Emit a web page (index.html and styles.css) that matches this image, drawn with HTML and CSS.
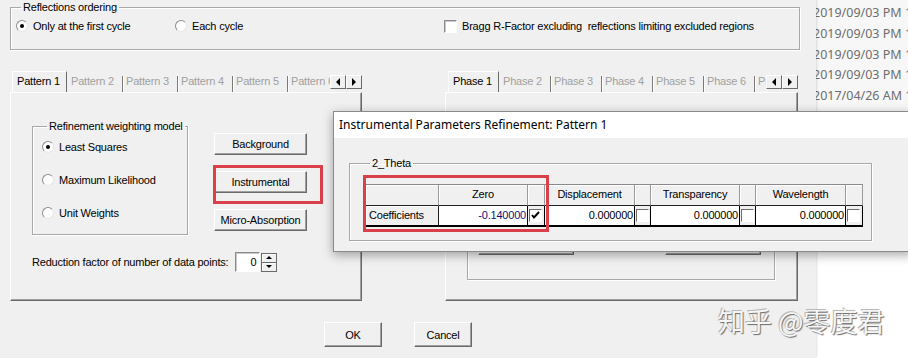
FILE: index.html
```html
<!DOCTYPE html>
<html>
<head>
<meta charset="utf-8">
<link rel="stylesheet" href="styles.css">
</head>
<body>
<div class="screen">
  <div class="app">
    <fieldset class="grp grp-order">
      <legend>Reflections ordering</legend>
      <div class="order-row">
        <div class="opt opt-first"><span class="rb on"></span><span>Only at the first cycle</span></div>
        <div class="opt opt-each"><span class="rb"></span><span>Each cycle</span></div>
        <div class="opt"><span class="cbx"></span><span>Bragg R-Factor excluding&nbsp; reflections limiting excluded regions</span></div>
      </div>
    </fieldset>

    <div class="tabs-row">
      <div class="tabctl tabctl-left">
        <div class="tabstrip">
          <div class="tabs">
            <div class="tab sel">Pattern 1</div>
            <div class="tab">Pattern 2</div>
            <div class="tab">Pattern 3</div>
            <div class="tab">Pattern 4</div>
            <div class="tab">Pattern 5</div>
            <div class="tab">Pattern 6</div>
          </div>
          <div class="arrows"><span class="arr"><i class="tri-l"></i></span><span class="arr"><i class="tri-r"></i></span></div>
        </div>
        <div class="tabpanel">
          <div class="pbody">
            <div class="prow">
              <fieldset class="grp grp-weight">
                <legend>Refinement weighting model</legend>
                <div class="wlist">
                  <div class="opt"><span class="rb on"></span><span>Least Squares</span></div>
                  <div class="opt"><span class="rb"></span><span>Maximum Likelihood</span></div>
                  <div class="opt"><span class="rb"></span><span>Unit Weights</span></div>
                </div>
              </fieldset>
              <div class="btncol">
                <div class="btn">Background</div>
                <div class="btn">Instrumental</div>
                <div class="btn">Micro-Absorption</div>
                <div class="mark mark-btn"></div>
              </div>
            </div>
            <div class="reduce">
              <span>Reduction factor of number of data points:</span>
              <span class="edit">0</span>
              <span class="spin"><span class="sp"><i class="tri-u"></i></span><span class="sp"><i class="tri-d"></i></span></span>
            </div>
          </div>
        </div>
      </div>

      <div class="tabctl tabctl-right">
        <div class="tabstrip">
          <div class="tabs">
            <div class="tab ph sel">Phase 1</div>
            <div class="tab ph">Phase 2</div>
            <div class="tab ph">Phase 3</div>
            <div class="tab ph">Phase 4</div>
            <div class="tab ph">Phase 5</div>
            <div class="tab ph">Phase 6</div>
            <div class="tab ph">Phase 7</div>
          </div>
          <div class="arrows"><span class="arr"><i class="tri-l"></i></span><span class="arr"><i class="tri-r"></i></span></div>
        </div>
        <div class="tabpanel">
          <div class="ibox">
            <div class="btn ibtn"></div>
            <div class="btn ibtn"></div>
          </div>
        </div>
      </div>
    </div>

    <div class="actions">
      <div class="btn abtn">OK</div>
      <div class="btn abtn">Cancel</div>
    </div>
  </div>

  <div class="side">
    <div class="dates">
      <div>2019/09/03 PM 1</div>
      <div>2019/09/03 PM 1</div>
      <div>2019/09/03 PM 1</div>
      <div>2019/09/03 PM 1</div>
      <div>2017/04/26 AM 1</div>
    </div>
  </div>

  <div class="dialog">
    <div class="dtitle">Instrumental Parameters Refinement: Pattern 1</div>
    <div class="dbody">
      <fieldset class="grp grp-theta">
        <legend>2_Theta</legend>
        <div class="grid">
          <div class="gh"></div>
          <div class="gh">Zero</div>
          <div class="gh"></div>
          <div class="gh">Displacement</div>
          <div class="gh"></div>
          <div class="gh">Transparency</div>
          <div class="gh"></div>
          <div class="gh">Wavelength</div>
          <div class="gh"></div>

          <div class="rh">Coefficients</div>
          <div class="gv neg">-0.140000</div>
          <div class="gc"><span class="cb"><svg width="11" height="11" viewBox="0 0 11 11"><path d="M2 5 L4 7.5 L9 2" fill="none" stroke="#000" stroke-width="2"/></svg></span></div>
          <div class="gv">0.000000</div>
          <div class="gc"><span class="cb"></span></div>
          <div class="gv">0.000000</div>
          <div class="gc"><span class="cb"></span></div>
          <div class="gv">0.000000</div>
          <div class="gc"><span class="cb"></span></div>
        </div>
      </fieldset>
    </div>
    <div class="mark mark-grid"></div>
  </div>

  <div class="watermark">知乎 @零度君</div>
</div>
</body>
</html>
```

FILE: styles.css
```css
* { box-sizing: border-box; }
html, body { margin: 0; padding: 0; }
body {
  width: 908px; height: 358px; overflow: hidden;
  background: #fff;
  font-family: "Liberation Sans", Arial, sans-serif;
  font-size: 11px; letter-spacing: -0.2px; color: #000;
}
.screen { position: relative; display: flex; width: 908px; height: 358px; }

.app {
  width: 816px; flex: none; background: #f0f0f0;
  padding: 0 0 0 10px; position: relative; z-index: 1;
  box-shadow: 1px 0 2px rgba(0,0,0,.12);
}

.grp { margin: 0; border: 1px solid #a8a8a8; min-width: 0; box-shadow: 1px 1px 0 #fff, inset 1px 1px 0 #fff; }
.grp > legend { padding: 0 2px; margin-left: 5px; line-height: 14px; }

.grp-order { width: 790px; padding: 5px 0 16px 5px; }
.order-row { display: flex; align-items: center; height: 14px; }
.opt { display: flex; align-items: center; gap: 5px; white-space: nowrap; height: 14px; }
.opt-first { width: 159px; }
.opt-each { width: 269px; }

.rb {
  width: 12px; height: 12px; border-radius: 50%; background: #fff; flex: none;
  border: 1px solid; border-color: #8c8c8c #e6e6e6 #e6e6e6 #8c8c8c; position: relative;
}
.rb.on::after {
  content: ""; position: absolute; left: 3px; top: 3px; width: 4px; height: 4px;
  border-radius: 50%; background: #000;
}
.cbx {
  width: 13px; height: 13px; background: #fff; flex: none;
  border: 1px solid; border-color: #8c8c8c #fff #fff #8c8c8c;
  box-shadow: inset 1px 1px 0 #c8c8c8;
}

.tabs-row { display: flex; margin-top: 21px; }
.tabctl-left { width: 352px; }
.tabctl-right { width: 353px; margin-left: 83px; }

.tabstrip { display: flex; align-items: flex-end; height: 21px; padding-left: 2px; }
.tabctl-right .tabstrip { padding-left: 3px; }
.tabs { flex: 1; display: flex; align-items: flex-end; overflow: hidden; height: 21px; }
.tab {
  flex: none; width: 55px; height: 16px; line-height: 11px; padding-left: 3px;
  color: #a0a0a0; white-space: nowrap;
  border-left: 1px solid #7a7a7a; box-shadow: inset 1px 0 0 #fff;
}
.tab.ph { width: 51px; }
.tab.sel {
  height: 21px; line-height: 19px; padding-left: 4px; color: #000;
  border: 1px solid; border-color: #fff #6a6a6a transparent #fff; border-bottom: 0;
  box-shadow: none;
}
.tab.sel + .tab { border-left: 0; box-shadow: none; padding-left: 4px; }
.arrows { display: flex; margin-bottom: 3px; flex: none; }
.arr {
  width: 16px; height: 14px; background: #f0f0f0;
  border: 1px solid; border-color: #fff #6a6a6a #6a6a6a #fff;
  display: flex; align-items: center; justify-content: center;
}
.tri-l { width: 0; height: 0; border-top: 4px solid transparent; border-bottom: 4px solid transparent; border-right: 4px solid #000; }
.tri-r { width: 0; height: 0; border-top: 4px solid transparent; border-bottom: 4px solid transparent; border-left: 4px solid #000; }
.tri-u { width: 0; height: 0; border-left: 3px solid transparent; border-right: 3px solid transparent; border-bottom: 3px solid #000; }
.tri-d { width: 0; height: 0; border-left: 3px solid transparent; border-right: 3px solid transparent; border-top: 3px solid #000; }

.tabpanel {
  height: 209px; position: relative;
  border: 1px solid; border-color: #fff #6a6a6a #6a6a6a #fff;
  box-shadow: inset -1px -1px 0 #a0a0a0;
}
.pbody { padding: 26px 0 0 21px; }
.prow { display: flex; align-items: flex-start; }
.grp-weight { width: 156px; height: 116px; padding: 7px 0 0 9px; }
.wlist { display: flex; flex-direction: column; gap: 19px; }

.btncol { margin-left: 26px; margin-top: 14px; display: flex; flex-direction: column; gap: 16px; position: relative; }
.btn {
  width: 93px; height: 22px; background: #f0f0f0;
  border: 1px solid; border-color: #fff #6a6a6a #6a6a6a #fff;
  box-shadow: inset -1px -1px 0 #a0a0a0;
  display: flex; align-items: center; justify-content: center; white-space: nowrap;
}
.mark { position: absolute; border: 3px solid #d9404a; }
.mark-btn { left: -1px; top: 32px; width: 110px; height: 39px; }

.reduce { display: flex; align-items: center; margin-top: 17px; height: 20px; }
.edit {
  margin-left: 7px; width: 25px; height: 20px; background: #fff; text-align: right;
  padding-right: 3px; line-height: 18px;
  border: 1px solid; border-color: #8c8c8c #fff #fff #8c8c8c;
  box-shadow: inset 1px 1px 0 #c8c8c8;
}
.spin { display: flex; flex-direction: column; width: 16px; height: 19px; margin-left: 1px; border: 1px solid #6a6a6a; }
.sp { flex: 1; display: flex; align-items: center; justify-content: center; background: #f0f0f0; box-shadow: inset 1px 1px 0 #fff; }
.sp + .sp { border-top: 1px solid #6a6a6a; }

.ibox {
  margin: 27px 22px 0 21px; height: 160px;
  border: 1px solid #a8a8a8; box-shadow: 1px 1px 0 #fff, inset 1px 1px 0 #fff;
  display: flex; align-items: flex-end; justify-content: space-between;
  padding: 0 13px 24px 10px;
}
.ibtn { width: 96px; }

.actions { display: flex; gap: 32px; margin-top: 21px; padding-left: 314px; }
.abtn { width: 58px; height: 25px; }

.side { flex: 1; background: #fff; overflow: hidden; }
.dates {
  height: 111px; background: #f7f7f7; padding-top: 3px; margin-left: -3px;
  font-family: "Noto Sans", "Open Sans", sans-serif; font-size: 12.5px; letter-spacing: 0;
  color: #6e6e6e; line-height: 20.75px; white-space: nowrap;
}

.dialog {
  position: absolute; left: 333px; top: 111px; width: 580px; height: 141px; z-index: 5;
  background: #f0f0f0; border: 1px solid #8a8a8a;
  box-shadow: 0 3px 10px rgba(0,0,0,.35);
}
.dtitle {
  height: 26px; background: #fff; padding-left: 5px; line-height: 25px;
  font-family: "Noto Sans", "Open Sans", sans-serif; font-size: 12px; letter-spacing: 0;
}
.dbody { padding: 18px 0 0 15px; }
.grp-theta { width: 523px; height: 85px; padding: 14px 0 0 15px; }
.grid {
  display: grid; width: 498px;
  grid-template-columns: 73px 89px 17px 90px 16px 89px 16px 90px 17px;
  grid-template-rows: 21px 21px;
  border-left: 1px solid #6d6d6d; border-top: 1px solid #8a8a8a;
}
.gh {
  background: #f0f0f0; border-right: 1px solid #9a9a9a; border-bottom: 1px solid #202020;
  box-shadow: inset 1px 1px 0 #fff; text-align: center; line-height: 19px;
}
.rh {
  background: #f0f0f0; border-right: 1px solid #202020; border-bottom: 2px solid #000;
  box-shadow: inset 1px 1px 0 #fff; padding-left: 3px; line-height: 19px;
}
.gv {
  background: #fff; border-right: 1px solid #000; border-bottom: 2px solid #000;
  text-align: right; padding-right: 1px; line-height: 19px;
}
.gv.neg { color: #10107a; }
.gc {
  background: #f0f0f0; border-right: 1px solid #000; border-bottom: 2px solid #000;
  display: flex; align-items: center; padding-left: 1px;
}
.cb {
  width: 13px; height: 13px; background: #fff;
  border: 1px solid; border-color: #6d6d6d #fff #fff #6d6d6d;
  display: flex; align-items: center; justify-content: center;
}
.mark-grid { left: 29px; top: 63px; width: 186px; height: 57px; }

.watermark {
  position: absolute; left: 718px; top: 301px; z-index: 6;
  font-family: "Noto Sans CJK SC", "Noto Sans", sans-serif; font-size: 27px; letter-spacing: 0;
  color: #f6f6f6; white-space: nowrap;
  text-shadow: 1px 1px 1px #6a6a6a, -1px -1px 0 #b8b8b8;
}
```
